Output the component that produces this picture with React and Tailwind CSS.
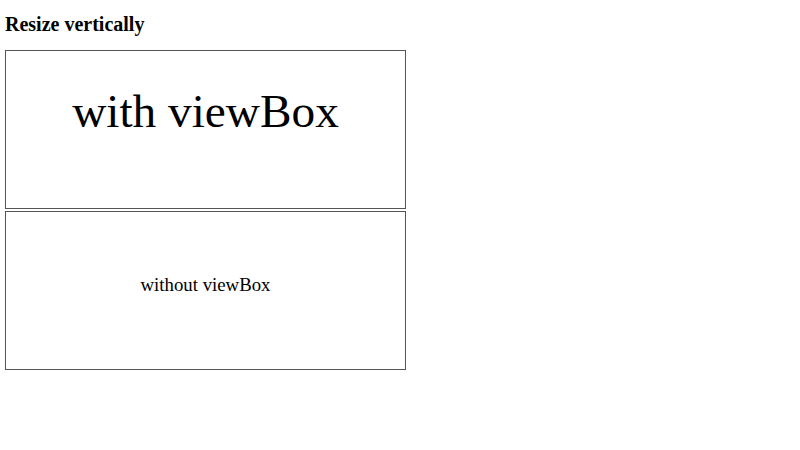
export default function App() {
  return (
    <div className="w-[800px] h-[450px] bg-white text-black pl-[5px] pt-[14px]" style={{ fontFamily: '"Liberation Serif", "Times New Roman", serif' }}>
      <h1 className="text-[20px] font-bold leading-none h-[20px]">Resize vertically</h1>
      <div className="mt-[16px] flex flex-col gap-[2px]">
        <div className="w-[401px] h-[159px] border border-[#555] flex justify-center pt-[37px]">
          <span className="text-[47.3px] leading-none">with viewBox</span>
        </div>
        <div className="w-[401px] h-[159px] border border-[#555] flex justify-center pt-[64px]">
          <span className="text-[18.8px] leading-none">without viewBox</span>
        </div>
      </div>
    </div>
  );
}
